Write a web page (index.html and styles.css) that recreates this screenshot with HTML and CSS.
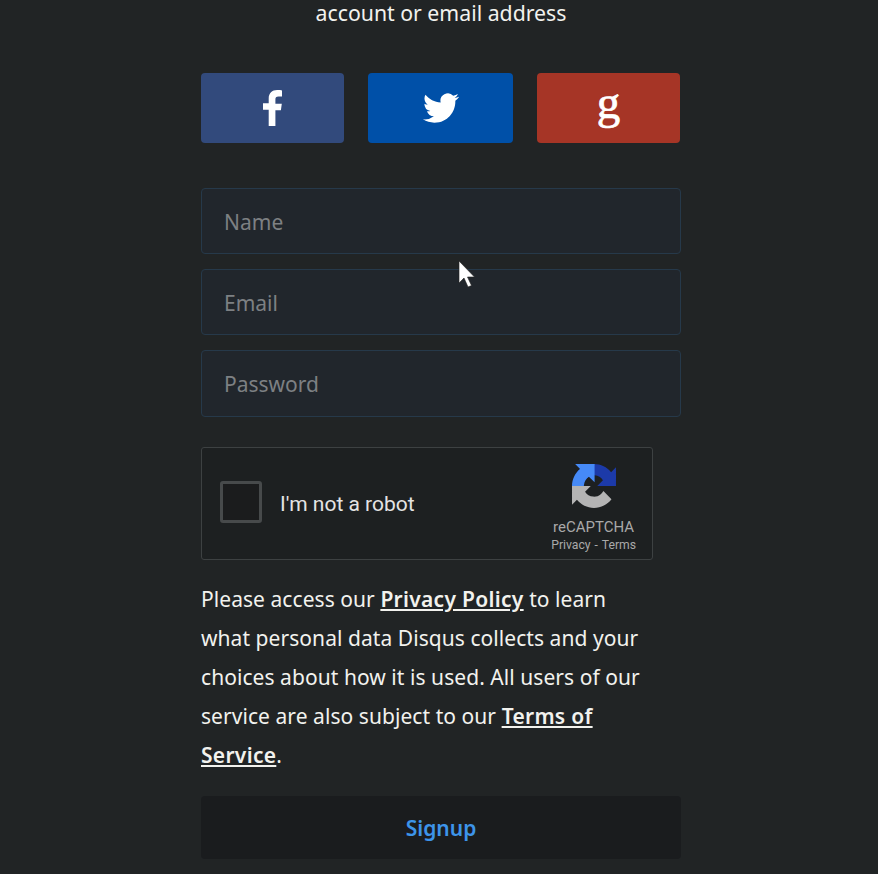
FILE: index.html
```html
<!DOCTYPE html>
<html lang="en">
<head>
    <meta charset="UTF-8">
    <title>Signup</title>
    <link rel="stylesheet" href="styles.css">
</head>
<body>
    <div class="container">
        <p class="intro">account or email address</p>
        <div class="social">
            <a class="social-btn fb" href="#">
                <svg width="20" height="36" viewBox="0 0 20 36"><path fill="#fff" d="M19 0.4v6.2h-3.4c-2.6 0-3.2 1.2-3.2 3.1v4.1h6.4l-0.9 6.5h-5.5V36H5.7V19.8H0v-6.5h5.7V8.6C5.7 3 9.100 0 14.100 0c2.200 0 4.100 0.200 4.900 0.400z"/></svg>
            </a>
            <a class="social-btn tw" href="#">
                <svg width="36" height="30" viewBox="0 0 24 20"><path fill="#fff" transform="translate(0 -2)" d="M23.953 4.57a10 10 0 01-2.825.775 4.958 4.958 0 002.163-2.723c-.951.555-2.005.959-3.127 1.184a4.92 4.92 0 00-8.384 4.482C7.69 8.095 4.067 6.13 1.64 3.162a4.822 4.822 0 00-.666 2.475c0 1.71.87 3.213 2.188 4.096a4.904 4.904 0 01-2.228-.616v.06a4.923 4.923 0 003.946 4.827 4.996 4.996 0 01-2.212.085 4.936 4.936 0 004.604 3.417 9.867 9.867 0 01-6.102 2.105c-.39 0-.779-.023-1.17-.067a13.995 13.995 0 007.557 2.209c9.053 0 13.998-7.496 13.998-13.985 0-.21 0-.42-.015-.63A9.935 9.935 0 0024 4.59z"/></svg>
            </a>
            <a class="social-btn gp" href="#">g</a>
        </div>
        <form class="signup" action="javascript:void(0);">
            <input type="text" placeholder="Name">
            <input type="text" placeholder="Email">
            <input type="password" placeholder="Password">
            <div class="captcha">
                <span class="captcha-box"></span>
                <span class="captcha-label">I'm not a robot</span>
                <div class="captcha-brand">
                    <svg width="44" height="44" viewBox="0 0 64 64">
                        <path fill="#1c3aa9" d="M64 31.955l-.033-1.37V4.687l-7.16 7.16C50.948 4.674 42.033.093 32.05.093c-10.4 0-19.622 4.96-25.458 12.64l11.736 11.86a15.55 15.55 0 0 1 4.754-5.334c2.05-1.6 4.952-2.906 8.968-2.906.485 0 .86.057 1.135.163 4.976.393 9.29 3.14 11.83 7.125l-8.307 8.307c10.522-.04 22.4-.066 27.295.005"/>
                        <path fill="#468af7" d="M31.862 0l-1.37.033H4.594l7.16 7.16C4.58 13.052 0 21.967 0 31.95c0 1.5.1 2.9.3 4.300l17-4.300 0-.6c0-.485.057-.86.163-1.135.393-4.976 3.14-9.29 7.125-11.83l8.307 8.307c-.04-10.522-.066-22.4.005-27.295"/>
                        <path fill="#b4b4b4" d="M.001 31.955l.033 1.37v25.9l7.16-7.16c5.86 7.173 14.774 11.754 24.76 11.754 10.4 0 19.622-4.96 25.458-12.64l-11.736-11.86a15.55 15.55 0 0 1-4.754 5.334c-2.05 1.6-4.952 2.906-8.968 2.906-.485 0-.86-.057-1.135-.163-4.976-.393-9.29-3.14-11.83-7.125l8.307-8.307C21.774 31.92 9.897 31.9 5 31.96"/>
                    </svg>
                    <span class="captcha-name">reCAPTCHA</span>
                    <span class="captcha-links">Privacy - Terms</span>
                </div>
            </div>
            <p class="legal">Please access our <a href="#">Privacy Policy</a> to learn what personal data Disqus collects and your choices about how it is used. All users of our service are also subject to our <a href="#">Terms of Service</a>.</p>
            <button type="button">Signup</button>
        </form>
    </div>
    <svg class="cursor" width="18" height="28" viewBox="0 0 18 28"><path fill="#fff" stroke="#222" stroke-width="0.6" d="M1 1v22l5-5 4 9 3.500-1.500-4-8.500h7z"/></svg>
</body>
</html>
```

FILE: styles.css
```css
html, body {
    height: 100%;
}
body {
    margin: 0;
    background-color: #212425;
    color: #f2f2ee;
    font-family: "Noto Sans", Arial, sans-serif;
    overflow: hidden;
    position: relative;
}
.container {
    width: 480px;
    margin-left: 201px;
}
.intro {
    margin: 0;
    height: 73px;
    font-size: 21.25px;
    line-height: 26px;
    text-align: center;
}
.social {
    display: grid;
    grid-template-columns: 143px 145px 143px;
    gap: 24px;
    margin-bottom: 45px;
}
.social-btn {
    display: flex;
    justify-content: center;
    align-items: center;
    height: 70px;
    border-radius: 4px;
    color: #fff;
    text-decoration: none;
}
.fb {
    background-color: #324a7c;
}
.tw {
    background-color: #0050a8;
}
.gp {
    background-color: #a63526;
    font-family: "Liberation Serif", serif;
    font-size: 47px;
    line-height: 1;
    padding-bottom: 11px;
    box-sizing: border-box;
    -webkit-text-stroke: 0.7px #fff;
}
.signup {
    display: flex;
    flex-direction: column;
}
.signup input {
    height: 66px;
    margin-bottom: 15px;
    padding: 2px 22px 0;
    box-sizing: border-box;
    background-color: #21262c;
    border: 1px solid #26394a;
    border-radius: 4px;
    color: #f2f2ee;
    font-family: inherit;
    font-size: 21px;
}
.signup input:nth-child(3) {
    height: 67px;
    padding-top: 0;
}
.signup input::placeholder {
    color: #7d8083;
    opacity: 1;
}
.captcha {
    display: flex;
    align-items: center;
    width: 452px;
    height: 113px;
    margin-top: 15px;
    padding: 0 16px 0 18px;
    box-sizing: border-box;
    background-color: #1d2021;
    border: 1px solid #3d4142;
    border-radius: 3px;
    font-family: Roboto, Arial, sans-serif;
}
.captcha-box {
    width: 42px;
    height: 42px;
    margin-bottom: 3px;
    box-sizing: border-box;
    background-color: #1b1c1d;
    border: 3px solid #474a4b;
    border-radius: 3px;
}
.captcha-label {
    margin-left: 18px;
    font-size: 21px;
    color: #e4e4e4;
    flex: 1;
}
.captcha-brand {
    display: flex;
    flex-direction: column;
    align-items: center;
    margin-top: 10px;
}
.captcha-name {
    margin-top: 9px;
    font-size: 15px;
    line-height: 20px;
    color: #a9a9a9;
}
.captcha-links {
    font-size: 12.2px;
    word-spacing: 1px;
    line-height: 17px;
    color: #a9a9a9;
}
.legal {
    width: 445px;
    margin: 20px 0 21px;
    font-size: 21px;
    line-height: 39px;
    letter-spacing: 0.06px;
}
.legal a {
    color: #f2f2ee;
    font-weight: 600;
    letter-spacing: 0.3px;
}
button {
    height: 63px;
    background-color: #1a1c1e;
    border: none;
    border-radius: 4px;
    color: #3d94ea;
    font-family: inherit;
    font-size: 21px;
    font-weight: 600;
}
.cursor {
    position: absolute;
    left: 458px;
    top: 260px;
}
```
